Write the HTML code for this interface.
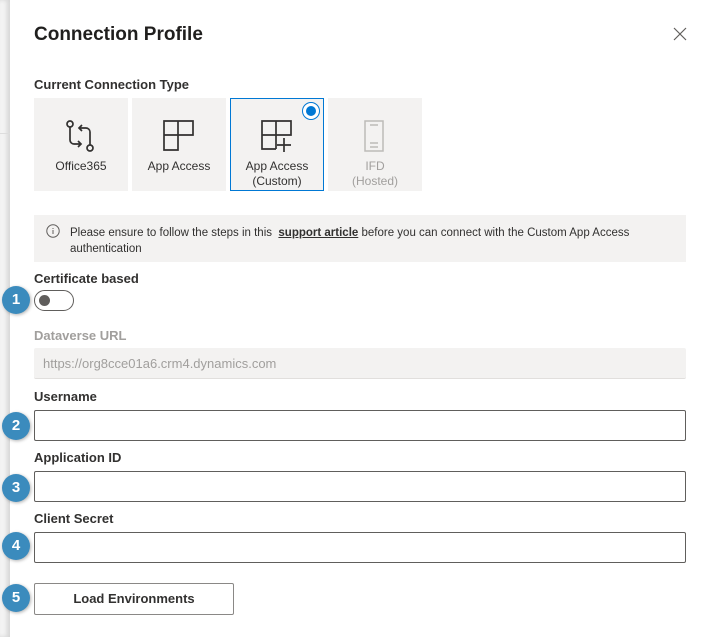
<!DOCTYPE html>
<html><head><style>
body{margin:0;width:704px;height:637px;overflow:hidden;background:#fff;font-family:"Liberation Sans",sans-serif;position:relative;color:#323130}
.left{position:absolute;left:0;top:0;width:10px;height:637px;background:#f3f3f3;box-shadow:inset -3px 0 4px rgba(0,0,0,.12)}
.left:after{content:"";position:absolute;left:0;top:133px;width:10px;height:1px;background:#ddd}
.a{position:absolute}
h1{position:absolute;left:34px;top:24px;margin:0;font-size:19px;font-weight:600;color:#201f1e}
.lbl{position:absolute;left:34px;font-size:13px;font-weight:bold;color:#323130}
.tile{position:absolute;top:98px;width:94px;height:93px;background:#f3f2f1;box-sizing:border-box;text-align:center;font-size:12px;color:#323130}
.tile svg{position:absolute;left:31px;top:22px}
.tile span{position:absolute;left:0;right:0;top:61px;line-height:15px}
.inp{position:absolute;left:34px;width:652px;height:31px;box-sizing:border-box;border:1px solid #605e5c;border-radius:2px;background:#fff}
.badge{position:absolute;left:2px;width:28px;height:28px;border-radius:50%;background:#3b8bbd;color:#fff;font-size:15px;font-weight:bold;text-align:center;line-height:28px;box-shadow:1px 1px 3px rgba(0,0,0,.3)}
</style></head><body>
<div class="left"></div>
<h1>Connection Profile</h1>
<svg class="a" style="left:673px;top:27px" width="14" height="14"><path d="M1 1L13 13M13 1L1 13" stroke="#605e5c" stroke-width="1.2"/></svg>
<div class="lbl" style="top:77px;font-weight:600">Current Connection Type</div>
<div class="tile" style="left:34px"><svg width="32" height="32" fill="none" stroke="#323130" stroke-width="1.7"><circle cx="5" cy="4" r="3"/><path d="M5 7V20a4 4 0 0 0 4 4h7M13 21l3 3-3 3"/><circle cx="25" cy="28" r="3"/><path d="M25 25V12a4 4 0 0 0-4-4h-7M17 5l-3 3 3 3"/></svg><span>Office365</span></div>
<div class="tile" style="left:132px"><svg width="32" height="32" fill="none" stroke="#323130" stroke-width="1.7"><path d="M1 1h14v29H1zM1 15h29V1H15"/></svg><span>App Access</span></div>
<div class="tile" style="left:230px;border:1px solid #0078d4"><svg width="34" height="34" style="left:30px;top:21px" fill="none" stroke="#323130" stroke-width="1.7"><path d="M1 1h29v14H1zM15 1v28M1 15v14h14M23 18v14M16 25h14"/></svg><span style="top:60px">App Access<br>(Custom)</span>
<div class="a" style="right:3px;top:3px;width:16px;height:16px;border:1.5px solid #0078d4;border-radius:50%;background:#fff"><div class="a" style="left:3px;top:3px;width:10px;height:10px;border-radius:50%;background:#0078d4"></div></div></div>
<div class="tile" style="left:328px;color:#a19f9d"><svg width="32" height="32" fill="none" stroke="#bdbbb8" stroke-width="1.5"><path d="M6 1h18v30H6zM11 5h8M11 23h8M11 27h8"/></svg><span>IFD<br>(Hosted)</span></div>
<div class="a" style="left:34px;top:215px;width:652px;height:47px;background:#f3f2f1;font-size:11.5px;color:#323130">
<svg class="a" style="left:12px;top:9px" width="14" height="14" fill="none" stroke="#605e5c"><circle cx="7" cy="7" r="6.2"/><path d="M7 6v4M7 4v1"/></svg>
<div class="a" style="left:36px;top:10px;line-height:16px;width:610px">Please ensure to follow the steps in this &nbsp;<b style="text-decoration:underline">support article</b> before you can connect with the Custom App Access authentication</div></div>
<div class="lbl" style="top:271px">Certificate based</div>
<div class="a" style="left:34px;top:290px;width:38px;height:19px;border:1px solid #605e5c;border-radius:11px"><div class="a" style="left:4px;top:4px;width:11px;height:11px;border-radius:50%;background:#605e5c"></div></div>
<div class="badge" style="top:286px">1</div>
<div class="lbl" style="top:328px;color:#a19f9d">Dataverse URL</div>
<div class="inp" style="top:348px;border:none;border-bottom:1px solid #e1dfdd;background:#f3f2f1;font-size:13px;color:#a19f9d;padding:8px 9px">https://org8cce01a6.crm4.dynamics.com</div>
<div class="lbl" style="top:389px">Username</div>
<div class="inp" style="top:410px"></div>
<div class="badge" style="top:412px">2</div>
<div class="lbl" style="top:450px">Application ID</div>
<div class="inp" style="top:471px"></div>
<div class="badge" style="top:474px">3</div>
<div class="lbl" style="top:511px">Client Secret</div>
<div class="inp" style="top:532px"></div>
<div class="badge" style="top:532px">4</div>
<div class="a" style="left:34px;top:583px;width:200px;height:32px;box-sizing:border-box;border:1px solid #8a8886;border-radius:2px;font-size:13px;font-weight:600;text-align:center;line-height:30px">Load Environments</div>
<div class="badge" style="top:584px">5</div>
</body></html>
